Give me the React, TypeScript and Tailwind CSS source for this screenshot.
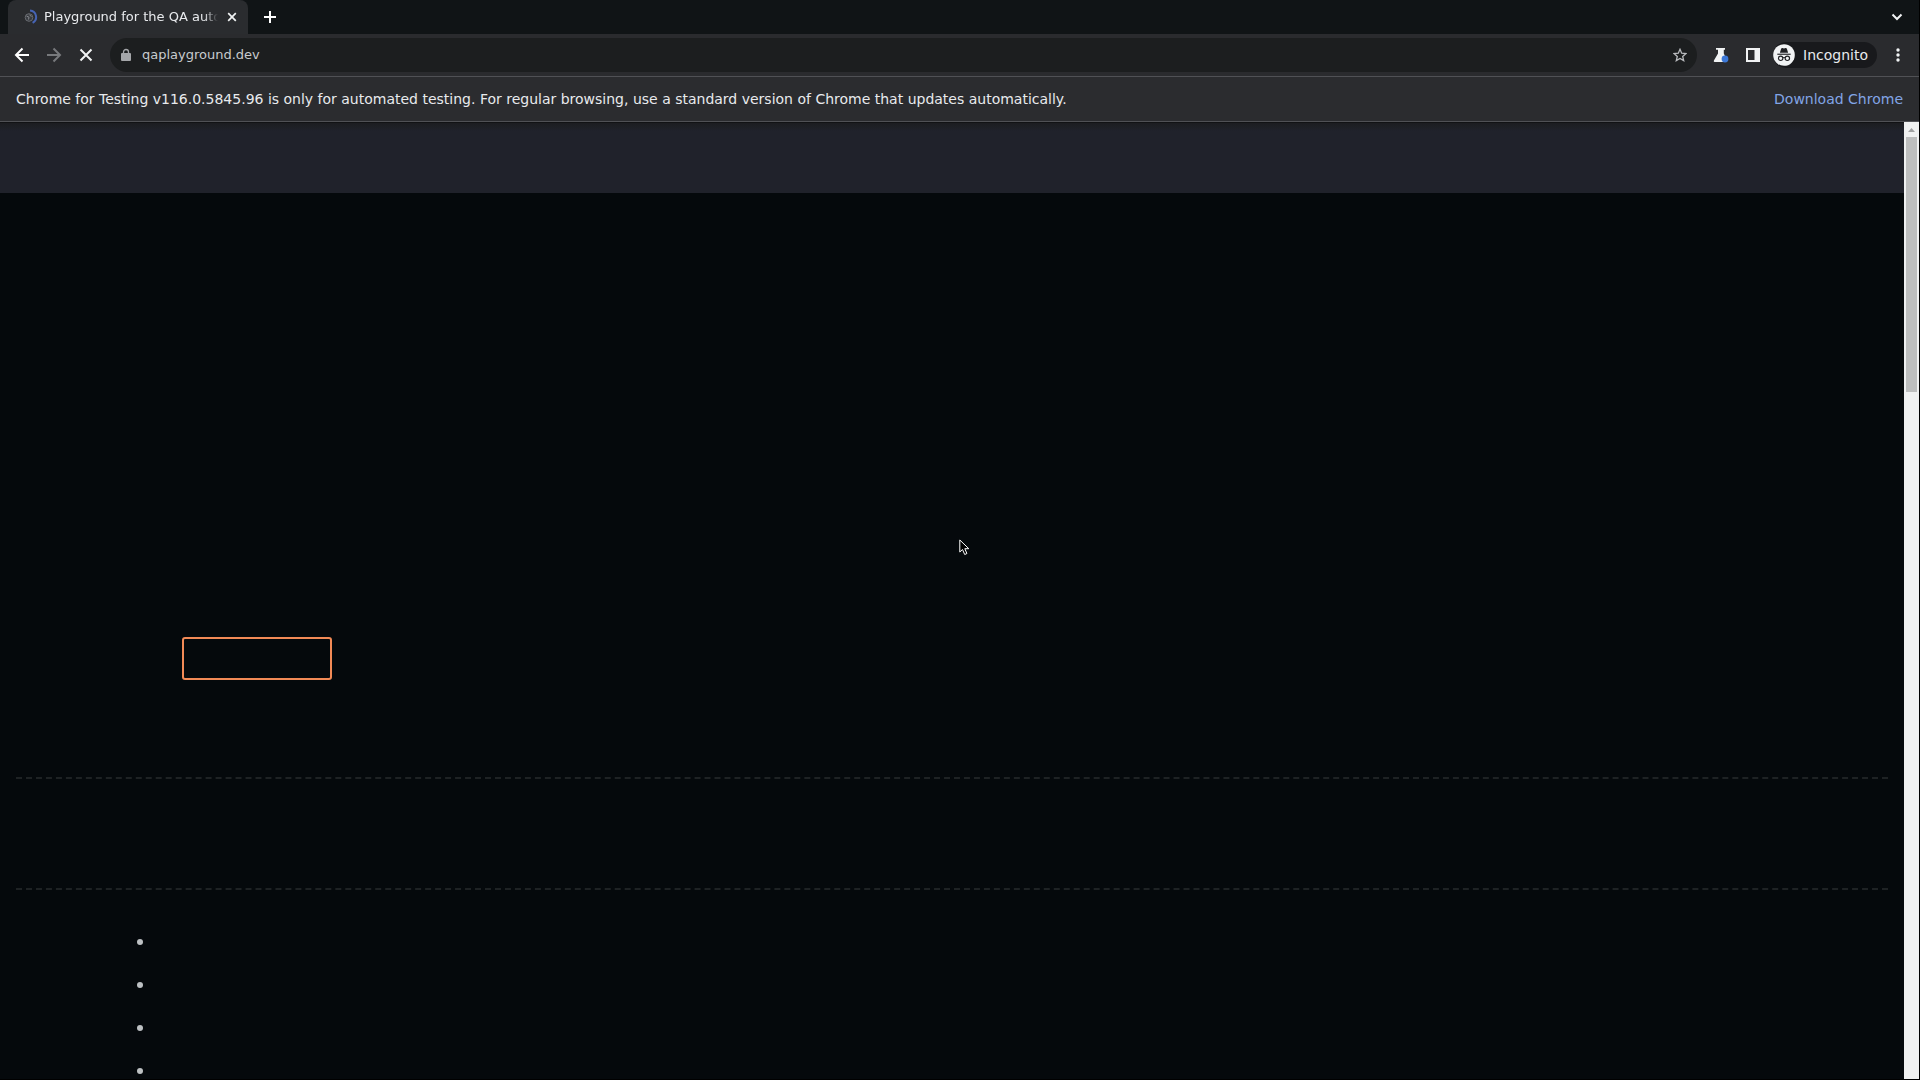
const tasks = [1, 2, 3, 4];

function TabStrip() {
  return (
    <div className="flex h-[34px] items-end bg-[#101416]">
      <div className="ml-2 flex h-[34px] w-60 items-center rounded-t-lg bg-[#2a2c2f] pr-2 pl-3.5">
        <svg className="size-4 shrink-0" viewBox="0 0 16 16" fill="none">
          <circle cx="7" cy="8.500" r="3.800" fill="#3a3d42" stroke="#686b70" />
          <path d="M4.500 7l2.500 1.200-.5 2.300M7.500 6l2 1.500" stroke="#85888d" />
          <path d="M8 1.500a6.600 6.600 0 0 1 2.600 12.400" stroke="#4664b4" strokeWidth="2" />
        </svg>
        <span className="ml-1.5 w-[176px] overflow-hidden text-[13px] leading-4 whitespace-nowrap text-[#e8eaed] [mask-image:linear-gradient(to_right,black_92%,transparent)]">
          Playground for the QA auto
        </span>
        <button type="button" aria-label="Close tab" className="ml-1.5 flex size-4 shrink-0 items-center justify-center">
          <svg className="size-2.5" viewBox="0 0 10 10">
            <path d="M1.200 1.200l7.600 7.600M8.800 1.200L1.200 8.800" stroke="#f1f3f4" strokeWidth="1.700" />
          </svg>
        </button>
      </div>
      <button type="button" aria-label="New tab" className="flex h-[34px] w-11 items-center justify-center">
        <svg className="size-3" viewBox="0 0 12 12">
          <path d="M6 0v12M0 6h12" stroke="#fff" strokeWidth="2" />
        </svg>
      </button>
      <button type="button" aria-label="Search tabs" className="ml-auto flex h-[34px] w-[45px] items-center justify-center">
        <svg className="size-3" viewBox="0 0 12 12" fill="none">
          <path d="M1.500 3.500L6 8l4.500-4.500" stroke="#f1f3f4" strokeWidth="2" />
        </svg>
      </button>
    </div>
  );
}

function Toolbar() {
  return (
    <div className="flex h-[42px] items-center bg-[#2a2b2e] pl-1.5">
      <button type="button" aria-label="Back" className="flex size-8 items-center justify-center">
        <svg className="size-4" viewBox="0 0 16 16" fill="none" stroke="#fff" strokeWidth="2">
          <path d="M15 8H2.500M8.500 1.500L2 8l6.500 6.500" />
        </svg>
      </button>
      <button type="button" aria-label="Forward" className="flex size-8 items-center justify-center">
        <svg className="size-4" viewBox="0 0 16 16" fill="none" stroke="#77797c" strokeWidth="2">
          <path d="M1 8h12.500M7.500 1.500L14 8l-6.500 6.500" />
        </svg>
      </button>
      <button type="button" aria-label="Stop loading" className="flex size-8 items-center justify-center">
        <svg className="size-3.5" viewBox="0 0 14 14">
          <path d="M1.500 1.500l11 11M12.500 1.500l-11 11" stroke="#f1f3f4" strokeWidth="2" />
        </svg>
      </button>

      <div className="ml-2 flex h-[34px] grow items-center rounded-full bg-[#1c1e1f] px-2.5">
        <svg className="ml-px h-3.5 w-2.5 shrink-0" viewBox="0 0 10 14">
          <path d="M1 5h8a1 1 0 0 1 1 1v6a1 1 0 0 1-1 1H1a1 1 0 0 1-1-1V6a1 1 0 0 1 1-1z" fill="#a4a6a9" />
          <path d="M2.500 5.500V4a2.500 2.500 0 0 1 5 0v1.500" fill="none" stroke="#a4a6a9" strokeWidth="1.300" />
        </svg>
        <input
          type="text"
          aria-label="Address"
          defaultValue="qaplayground.dev"
          className="ml-[11px] h-6 min-w-0 grow bg-transparent pb-0.5 text-[13px] text-[#c8cbce] outline-none"
        />
        <button type="button" aria-label="Bookmark this tab">
          <svg className="size-3.5" viewBox="0 0 14 14" fill="none">
            <path d="M7 1.300l1.700 3.900 4.200.4-3.200 2.800 1 4.200L7 10.400l-3.700 2.200 1-4.200L1.100 5.600l4.200-.4z" stroke="#b9bbbe" strokeWidth="1.300" />
          </svg>
        </button>
      </div>

      <button type="button" aria-label="Chrome Labs" className="ml-2 flex size-8 items-center justify-center">
        <svg className="size-4" viewBox="0 0 16 16">
          <path d="M3 1h9v1.800h-1.200v3.700L14 13.500q.5 1.500-1 1.500H1.800Q.3 15 .9 13.500L5 6.500V2.800H3z" fill="#f1f3f4" />
          <circle cx="12" cy="12" r="3.400" fill="#3c78d8" />
        </svg>
      </button>
      <button type="button" aria-label="Side panel" className="flex size-8 items-center justify-center">
        <svg className="size-3.5" viewBox="0 0 14 14">
          <path d="M0 0h14v14H0zM2 2v10h6.500V2z" fill="#f1f3f4" fillRule="evenodd" />
        </svg>
      </button>
      <button type="button" className="ml-1 flex h-[26px] w-[104px] items-center rounded-full bg-[#18191c] text-[14px] text-[#e8eaed]">
        <svg className="size-[22px] shrink-0" viewBox="0 0 23 23">
          <circle cx="11.500" cy="11.500" r="11.300" fill="#f1f3f4" />
          <path d="M7.200 9.200L8.500 5q.4-1 1.400-.8l1.600.4 1.600-.4q1-.2 1.400.8l1.300 4.200z" fill="#202124" />
          <path d="M4.500 10.700h14" stroke="#202124" strokeWidth="1.200" />
          <g fill="none" stroke="#202124" strokeWidth="1.200">
            <circle cx="8" cy="15" r="2.300" />
            <circle cx="15" cy="15" r="2.300" />
            <path d="M10.200 14.500q1.300-.8 2.600 0" />
          </g>
        </svg>
        <span className="ml-2">Incognito</span>
      </button>
      <button type="button" aria-label="Menu" className="flex h-8 w-[42px] items-center justify-center">
        <svg className="h-4 w-1" viewBox="0 0 4 16" fill="#f1f3f4">
          <circle cx="2" cy="3" r="1.700" />
          <circle cx="2" cy="8" r="1.700" />
          <circle cx="2" cy="13" r="1.700" />
        </svg>
      </button>
    </div>
  );
}

function InfoBar() {
  return (
    <div className="flex h-[46px] items-center justify-between border-y border-[#505155] bg-[#2b2c2f] px-4 text-[14px]">
      <p className="text-[#e8eaed]">
        Chrome for Testing v116.0.5845.96 is only for automated testing. For regular browsing, use a standard version of Chrome that updates automatically.
      </p>
      <a href="#download" className="text-[#82a5e6]">Download Chrome</a>
    </div>
  );
}

function Page() {
  return (
    <div className="min-w-0 grow overflow-hidden bg-[#05090c]">
      <header className="h-[71px] border-t border-[#111214] bg-[#20222b]">
        <div className="h-2 bg-linear-to-b from-[#1c1d20] to-[#20222b]" />
      </header>
      <main className="px-4">
        <section className="flex h-[584px] items-end px-[166px] pb-[97px]">
          <button type="button" aria-label="Get started" className="h-[43px] w-[150px] rounded-[3px] border-2 border-[#f28a56]" />
        </section>
        <section className="h-[113px] border-y-2 border-dashed border-[#1e2224]" />
        <ul className="flex flex-col gap-[37px] px-[121px] pt-[49px]">
          {tasks.map((task) => (
            <li key={task} className="size-1.5 rounded-full bg-[#bdc1c3]" />
          ))}
        </ul>
      </main>
    </div>
  );
}

function Scrollbar() {
  return (
    <div className="flex w-[15px] shrink-0 flex-col items-center bg-[#f0f1f1]">
      <svg className="size-[15px]" viewBox="0 0 15 15">
        <path d="M4 10l3.500-4L11 10z" fill="#a0a1a2" />
      </svg>
      <div className="h-[255px] w-[11px] bg-[#bdbebe]" />
    </div>
  );
}

export default function App() {
  return (
    <div className="relative flex h-screen flex-col overflow-hidden border-r border-b border-black bg-black font-['DejaVu_Sans',sans-serif]">
      <TabStrip />
      <Toolbar />
      <InfoBar />
      <div className="flex min-h-0 grow">
        <Page />
        <Scrollbar />
      </div>
      {/* Mouse pointer */}
      <svg className="absolute top-1/2 left-1/2 h-[17px] w-3 -translate-px" viewBox="0 0 12 17">
        <path d="M.800 1v12l2.700-2.500 2.200 5 2.200-1-2.100-4.800h4z" fill="#000" stroke="#fff" />
      </svg>
    </div>
  );
}
